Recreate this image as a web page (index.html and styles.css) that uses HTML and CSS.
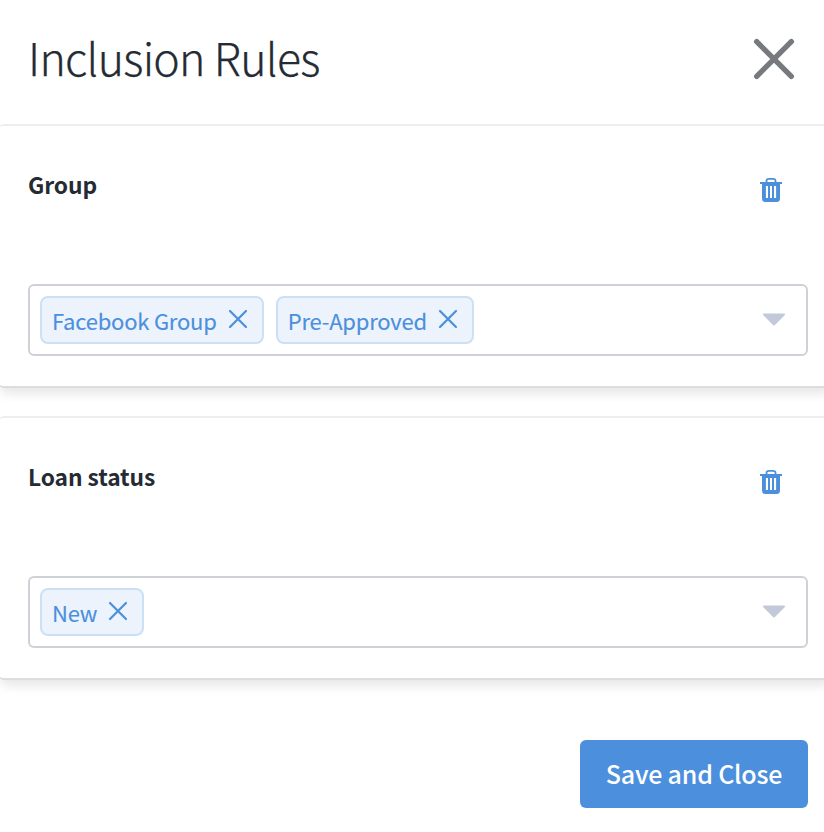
FILE: index.html
```html
<!DOCTYPE html>
<html lang="en">
<head>
    <meta charset="UTF-8">
    <meta name="viewport" content="width=device-width, initial-scale=1.0">
    <title>Inclusion Rules</title>
    <link rel="stylesheet" href="styles.css">
</head>
<body>

    <svg width="0" height="0" class="sprite">
        <symbol id="x" viewBox="0 0 20 20">
            <path d="M2 2L18 18M18 2L2 18" fill="none" stroke="currentColor" stroke-width="2.2" stroke-linecap="round"/>
        </symbol>
        <symbol id="trash" viewBox="0 0 22 26">
            <path d="M6.5 5V3.8Q6.5 1.9 9 1.9H13Q15.5 1.9 15.5 3.8V5" fill="none" stroke="currentColor" stroke-width="1.8"/>
            <path fill="currentColor" fill-rule="evenodd" d="M0 5H22V7H20V21.5Q20 25 16.5 25H5.5Q2 25 2 21.5V7H0ZM5.9 9V21H8V9ZM10 9V21H12V9ZM14 9V21H16.1V9Z"/>
        </symbol>
        <symbol id="arrow" viewBox="0 0 24 14">
            <path d="M2 1.5H22L12 11.5Z" fill="currentColor" stroke="currentColor" stroke-width="2" stroke-linejoin="round"/>
        </symbol>
    </svg>

    <header class="header">
        <h1>Inclusion Rules</h1>
        <button class="close" aria-label="Close">
            <svg width="42" height="42" viewBox="0 0 42 42"><path d="M3.7 3.7L38.3 38.3M38.3 3.7L3.7 38.3" fill="none" stroke="currentColor" stroke-width="5.4" stroke-linecap="round"/></svg>
        </button>
    </header>

    <section class="card">
        <div class="card-head">
            <h2>Group</h2>
            <button class="trash" aria-label="Delete"><svg width="22" height="26"><use href="#trash"/></svg></button>
        </div>
        <div class="select">
            <span class="tag">Facebook Group <svg width="20" height="20"><use href="#x"/></svg></span>
            <span class="tag">Pre-Approved <svg width="20" height="20"><use href="#x"/></svg></span>
            <svg class="arrow" width="24" height="14"><use href="#arrow"/></svg>
        </div>
    </section>

    <section class="card">
        <div class="card-head">
            <h2>Loan status</h2>
            <button class="trash" aria-label="Delete"><svg width="22" height="26"><use href="#trash"/></svg></button>
        </div>
        <div class="select">
            <span class="tag">New <svg width="20" height="20"><use href="#x"/></svg></span>
            <svg class="arrow" width="24" height="14"><use href="#arrow"/></svg>
        </div>
    </section>

    <footer class="footer">
        <button class="save">Save and Close</button>
    </footer>

</body>
</html>
```
FILE: styles.css
```css
* { box-sizing: border-box; }
body { margin: 0; height: 832px; overflow: hidden; background: #fff; color: #252b33; font-family: "Noto Sans CJK SC", sans-serif; }
h1, h2 { margin: 0; }
button { padding: 0; border: none; background: none; font-family: inherit; }
svg { display: block; flex: none; }
.sprite { position: absolute; }

.header { display: flex; justify-content: space-between; align-items: flex-start; height: 124px; padding: 27px 29px 0 28px; }
.header h1 { font-size: 44.6px; font-weight: 300; line-height: 60px; letter-spacing: -0.74px; -webkit-text-stroke: 0.25px; }
.close { margin-top: 11px; color: #76797e; }

.card { height: 264px; margin: 0 -8px 28px -2px; padding: 42px 24px 0 30px; background: #fff; border-top: 2px solid #eee; border-bottom: 2px solid #ddd; border-radius: 6px; box-shadow: 0 8px 12px -3px rgba(0, 0, 0, 0.11); }
.card-head { display: flex; justify-content: space-between; height: 116px; padding-right: 26px; }
.card-head h2 { font-size: 22.8px; font-weight: 700; line-height: 34px; letter-spacing: -0.1px; }
.trash { align-self: flex-start; margin-top: 9px; color: #4b8fdd; }

.select { display: flex; align-items: center; gap: 12px; height: 72px; padding: 0 20px 0 10px; border: 2px solid #ced2d6; border-radius: 6px; }
.tag { display: flex; gap: 11.2px; height: 48px; padding: 0 14px 0 10px; border: 2px solid #cce0f5; border-radius: 8px; background: #ecf3fc; color: #4b8fdd; font-size: 22px; line-height: 44px; letter-spacing: -0.22px; white-space: nowrap; -webkit-text-stroke: 0.12px; }
.tag svg { margin-top: 11px; }
.arrow { margin-left: auto; color: #c2cada; }

.footer { display: flex; justify-content: flex-end; padding: 32px 16px 0; }
.save { width: 228px; height: 68px; padding-bottom: 2px; border-radius: 6px; background: #4b8fdd; color: #fff; font-size: 25px; font-weight: 500; line-height: 66px; letter-spacing: -0.2px; }
```
